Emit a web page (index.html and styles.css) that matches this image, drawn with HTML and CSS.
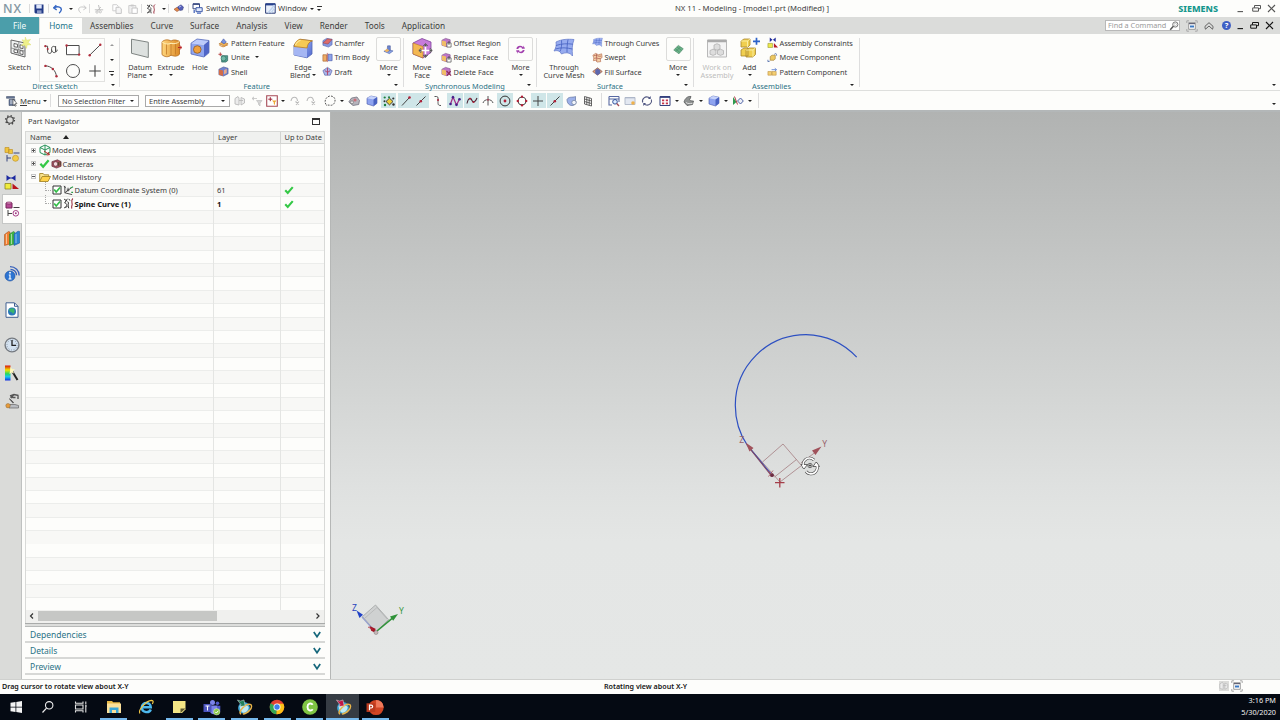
FILE: index.html
```html
<!DOCTYPE html>
<html lang="en">
<head>
<meta charset="utf-8">
<title>NX 11 - Modeling</title>
<link rel="stylesheet" href="styles.css">
</head>
<body>
<svg class="defs" width="0" height="0">
<defs>
<linearGradient id="gOr" x1="0" x2="1"><stop offset="0" stop-color="#ffd67c"/><stop offset="1" stop-color="#dc8a28"/></linearGradient>
<linearGradient id="gBl" x1="0" x2="1" y1="0" y2="1"><stop offset="0" stop-color="#a9bcf6"/><stop offset="1" stop-color="#536bd0"/></linearGradient>
<linearGradient id="gHeat" x1="0" x2="0" y1="0" y2="1"><stop offset="0" stop-color="#d81010"/><stop offset=".3" stop-color="#f2e400"/><stop offset=".55" stop-color="#25d860"/><stop offset=".75" stop-color="#18c8f0"/><stop offset="1" stop-color="#1030e0"/></linearGradient>
<symbol id="save" viewBox="0 0 10 10"><path d="M.5 .5h9v9h-8l-1-1z" fill="#223a86"/><path d="M2.3 .5h5.4v4H2.3z" fill="#dfe6fa"/><path d="M3 6.3h4.5v3.2H3z" fill="#8c9ac8"/></symbol>
<symbol id="undo" viewBox="0 0 10 10"><path d="M3.3 1.2L.7 3.8l3 2M1 3.8C5 1.8 9 3 8.2 6.2 7.8 7.7 7 8.6 6 9" fill="none" stroke="#3768c4" stroke-width="1.4"/></symbol>
<symbol id="redo" viewBox="0 0 10 10"><path d="M6.7 1.5l2.6 2.4-3 2M9 3.9C5 2 1 3 1.8 6c.3 1.5 1 2.2 2 2.7" fill="none" stroke="#c9c9c9" stroke-width="1"/></symbol>
<symbol id="cut" viewBox="0 0 10 10"><path d="M4.5 1l1.3 5.2M.8 5.8h8.4M6.8 3L2.8 7.6" fill="none" stroke="#c0c0c0"/><circle cx="3" cy="8" r="1.2" fill="none" stroke="#c9c9c9"/><circle cx="6.3" cy="7.8" r="1.1" fill="none" stroke="#c9c9c9"/></symbol>
<symbol id="copy" viewBox="0 0 10 10"><path d="M.8 .7h4l1.4 1.5v4.6H.8z" fill="#fff" stroke="#cfcfcf"/><path d="M4 3.3h3.6l1.7 1.5v4.6H4z" fill="#f5f5f5" stroke="#c6c6c6"/></symbol>
<symbol id="paste" viewBox="0 0 10 10"><path d="M.8 1.5h7v7.7h-7z" fill="#f0f0f0" stroke="#cfcfcf"/><path d="M2.7 .6h3v1.8h-3z" fill="#c9c9c9"/><path d="M4 4h5.3v5.4H4z" fill="#fff" stroke="#c6c6c6"/></symbol>
<symbol id="spine" viewBox="0 0 10 10"><path d="M1 1l3 2M4 .7L1.5 4.5M1.5 4.5c2.4.6 2.4 2 1 3.4M1 9l3-1.3M4.6 3.5c1 1.4-.7 2.7.6 5.8M5.3.8l1 1.6" fill="none" stroke="#333" stroke-width=".9"/><path d="M9 .5C6.5 2.5 9 5 8.2 6.7 7.7 7.7 7.7 8.4 8 9.6" fill="none" stroke="#9e3444" stroke-width="1"/></symbol>
<symbol id="brick" viewBox="0 0 11 9"><path d="M1 5.3l3-2 3 2.3-3 2z" fill="#e08a4b" stroke="#8a3b1f" stroke-width=".5"/><path d="M4.5 3L8 .8l2.5 2.3-1 3-2.7.3z" fill="#5861b9" stroke="#2d3474" stroke-width=".5"/><path d="M6 3.2l2.2-1.2" stroke="#cbd0ff" stroke-width=".8"/></symbol>
<symbol id="switchw" viewBox="0 0 11 11"><path d="M1 .8h6.5v5H1z" fill="#fff" stroke="#384880"/><path d="M1 1.2h6.5" stroke="#384880" stroke-width="1.4"/><path d="M4 4.7h6.2v4H4z" fill="#dfe8fb" stroke="#3e5aa8"/><path d="M2.2 7v3M5 10.2h4" stroke="#4968bc" stroke-width="1.3"/></symbol>
<symbol id="window" viewBox="0 0 11 11"><path d="M.6 .8h9.6v9.4H.6z" fill="#e9f0fb" stroke="#2e3f78" stroke-width="1"/><path d="M.6 1.4h9.6" stroke="#25408d" stroke-width="2"/><path d="M9.5 2L3 10M9.5 5L6 10" stroke="#bed3ee" stroke-width="1.3"/></symbol>
<symbol id="min" viewBox="0 0 9 9"><path d="M1.5 7.6h5.5" stroke="currentColor" stroke-width="1.1"/></symbol>
<symbol id="restore" viewBox="0 0 9 9"><path d="M2.5 3.8V1.5h6v3.2H6.8" fill="none" stroke="currentColor"/><path d="M.7 3.9h5.8v3.3H.7z" fill="none" stroke="currentColor"/></symbol>
<symbol id="close" viewBox="0 0 9 9"><path d="M1 1l7 7M8 1L1 8" stroke="currentColor" stroke-width="1.15"/></symbol>
<symbol id="lens" viewBox="0 0 10 10"><circle cx="6.3" cy="3.5" r="2.6" fill="none" stroke="#666" stroke-width=".9"/><circle cx="6.3" cy="3.5" r="1.2" fill="none" stroke="#999" stroke-width=".5"/><path d="M4.4 5.3L1.2 8.7" stroke="#555" stroke-width="1.5"/></symbol>
<symbol id="full" viewBox="0 0 12 12"><path d="M.8 3V.8H3M9 .8h2.2V3M11.2 9v2.2H9M3 11.2H.8V9" fill="none" stroke="#aaa"/><path d="M2.7 2.7h6.6v6.6H2.7z" fill="#fff" stroke="#777" stroke-width=".7"/><path d="M3 3.6h6" stroke="#667" stroke-width="1.2"/><path d="M4 6.5h4" stroke="#3a78c2" stroke-width="2"/></symbol>
<symbol id="chev2" viewBox="0 0 10 10"><path d="M1 5.3l4-3.6 4 3.6M1.5 8.2L5 5l3.5 3.2M1 5.3v1.3l.5 1.6M9 5.3v1.3l-.5 1.6" fill="none" stroke="#555" stroke-width=".9"/></symbol>
<symbol id="sketch" viewBox="0 0 22 22"><path d="M2 3l14 3v14L2 16z" fill="#f0f2f2" stroke="#666"/><path d="M5 6.5l3.5.8v3L5 9.7zM11 7.8l3 .8v3l-3-.6zM5 12.5l3.5.6V16L5 15.2zM11 13.5l3 .6v3.5l-3-.7z" fill="#fff" stroke="#555" stroke-width=".9"/><path d="M2 11l14 3M9.8 4.5v13.8" stroke="#777" stroke-width=".7"/><path d="M16.3 0l1.3 3.2L21.5 2.4l-2.3 3 2.8 2.4-3.8.1-.7 3.5-1.8-3.2-3.6.4 2.7-2.6L13 2.7l3 .7z" fill="#eef08a" stroke="#d6dc66" stroke-width=".4"/></symbol>
<symbol id="s1" viewBox="0 0 16 16"><path d="M2 4.2h2.6v5c0 3 4 3 4 0v-2.6c0-3 4-3 4 0v3.5c-1.8 1.3-3.2.2-3.2-1.4M12.6 4v5.5c.8.5 1.6-.4 1.6-1.8" fill="none" stroke="#4c4c4c"/><circle cx="2.3" cy="4.2" r="1.1" fill="#b02d3c"/><circle cx="4.7" cy="7" r="1" fill="#b02d3c"/></symbol>
<symbol id="s2" viewBox="0 0 16 16"><path d="M1.5 3.5h12.6v9.2H1.5z" fill="#fff" stroke="#4c4c4c"/><circle cx="1.6" cy="3.5" r="1.2" fill="#b02d3c"/><circle cx="14.1" cy="12.6" r="1.2" fill="#b02d3c"/></symbol>
<symbol id="s3" viewBox="0 0 16 16"><path d="M2.5 13.3L13.4 2.7" stroke="#4c4c4c"/><circle cx="2.7" cy="13.2" r="1.2" fill="#b02d3c"/><circle cx="13.3" cy="2.8" r="1.2" fill="#b02d3c"/></symbol>
<symbol id="s4" viewBox="0 0 16 16"><path d="M2.2 2.8c6 .3 10.5 4.3 11.3 10.7" fill="none" stroke="#4c4c4c"/><circle cx="2.4" cy="2.9" r="1.2" fill="#b02d3c"/><circle cx="9.8" cy="6" r="1.2" fill="#b02d3c"/><circle cx="13.5" cy="13.2" r="1.2" fill="#b02d3c"/></symbol>
<symbol id="s5" viewBox="0 0 16 16"><circle cx="8" cy="8" r="6.5" fill="none" stroke="#4c4c4c"/></symbol>
<symbol id="s6" viewBox="0 0 16 16"><path d="M8 2.2v11.6M2.2 8h11.6" stroke="#444" stroke-width="1.1"/></symbol>
<symbol id="datum" viewBox="0 0 22 22"><path d="M2.5 2.2l16.8 3v15.3l-16.8-4.2z" fill="#dde1df" stroke="#7f8583"/></symbol>
<symbol id="extrude" viewBox="0 0 22 22"><path d="M2 4.8c3-2.6 6.5-2.3 9-.8 2.5-1.8 6-1 8.5.4v12.8c-2.500 2.600-5 2.200-8.500 1-3 2.400-6.500 1.800-9-.6z" fill="url(#gOr)" stroke="#b26a1c" stroke-width=".8"/><path d="M11 6.500v11.800M6.500 7v10.500M15.500 7v10.500" stroke="#c27a28" stroke-width=".8"/><path d="M2 4.800c3 2.600 6.500 2.600 9 1.500 2.500.8 6 .5 8.500-1.900" fill="none" stroke="#fff0b8"/><path d="M18 10.500h3.500M20 8.500l1.700 2-1.700 2" stroke="#b22" fill="none"/></symbol>
<symbol id="hole" viewBox="0 0 22 22"><path d="M2 6.200L8 2l12 1.500-5 4z" fill="#bccbfb"/><path d="M2 6.200l13 1.500V20L2 17z" fill="#8fa5ee"/><path d="M15 7.700l5-4.200v12.200L15 20z" fill="#4f65c7"/><circle cx="8.300" cy="12.500" r="3.800" fill="#f0a03c" stroke="#915b22" stroke-width=".8"/><path d="M2 6.200L8 2l12 1.500v12.200L15 20 2 17z" fill="none" stroke="#5468ba" stroke-width=".8"/></symbol>
<symbol id="edge" viewBox="0 0 22 22"><path d="M2 8l6-5.600 12 1.500V17l-5 3.800L2 18z" fill="url(#gBl)" stroke="#5064b4" stroke-width=".8"/><path d="M2 10h13v10.500L2 18z" fill="#a5b6f3"/><path d="M2 9.500C3 5 5.500 3 8 2.200L20.500 3.800c-3 .8-5 3-5.500 7.200L2 9.500z" fill="#f6ca55" stroke="#b97c21" stroke-width=".8"/><path d="M3.500 8c1-2.500 2.500-4 5-4.600" fill="none" stroke="#fff2b4"/></symbol>
<symbol id="face" viewBox="0 0 22 22"><path d="M2 6l9-4.500L20 5v10.500L12 21 2 17z" fill="#c67bdb" stroke="#7e4399" stroke-width=".8"/><path d="M2 6l10 3.500V21L2 17z" fill="#f4b852" stroke="#b0742a" stroke-width=".6"/><path d="M14.500 7v13M8 13.500h13M14.500 6.500l-2 2.200h4zM14.500 20.500l-2-2.200h4zM7.800 13.500l2.200-2v4zM21.300 13.500l-2.200-2v4z" stroke="#444" fill="#fff" stroke-width=".8"/><path d="M14.500 9.500v8M10.500 13.500h8" stroke="#fff" stroke-width="1.600"/></symbol>
<symbol id="mesh" viewBox="0 0 22 22"><path d="M3 5c6-3 12-3 18-2.500-2 5-2 10-1.500 16.500C17 15.500 13 15 8.500 17 7 14 4.500 13 1 14c2-3 2.500-6 2-9z" fill="#96abef" stroke="#6b80cc" stroke-width=".8"/><path d="M8.500 3.300c.5 5-.2 8.500-1.500 11.200M15 2.500c-1 5-1 9.500-1 13M3 8.500c6-2 11-2 17-1.300M2.300 12c6-1.800 11.500-1.300 17 0" fill="none" stroke="#4460c0" stroke-width=".8"/></symbol>
<symbol id="work" viewBox="0 0 22 22"><path d="M1.500 3h19v17h-19z" fill="#f4f4f4" stroke="#b9b9b9"/><path d="M1.500 4h19" stroke="#aaa" stroke-width="2.500"/><path d="M8 8l3-1.300L14 8v4l-3 1.200L8 12zM4 13.500l3-1.300 3 1.300v3.700l-3 1.200-3-1.200zM11.500 13.500l3-1.300 3 1.300v3.700l-3 1.200-3-1.200z" fill="#ddd" stroke="#aaa" stroke-width=".7"/></symbol>
<symbol id="add" viewBox="0 0 22 22"><path d="M2 4l3-2h6v6l-2 2H2zM7 13l3-2h6.500v6.500L14 20H7zM2 13l3-2h4v8H2z" fill="#f0cf50" stroke="#a8872e" stroke-width=".8"/><path d="M2 4h6.500l2.500-2M8.500 4v6M7 13h7l2.500-2M14 13v7" fill="none" stroke="#fbf0a8" stroke-width=".9"/><path d="M17.500 .8v7M14 4.300h7" stroke="#2d62c8" stroke-width="1.700"/></symbol>
<symbol id="cube" viewBox="0 0 12 12"><path d="M1 3.200L5 1l6 1.300v6L7.500 11 1 9z" fill="#8ea3ef" stroke="#4658a8" stroke-width=".6"/><path d="M1 3.200L5 1l6 1.300L7.500 4.600z" fill="#c6d3fb"/><path d="M7.500 4.600L11 2.300v6L7.500 11z" fill="#4962c2"/></symbol>
<symbol id="pattern" viewBox="0 0 12 12"><path d="M1 7.500l4-2.200 6 2-4 2.700z" fill="#f2b456" stroke="#a86a24" stroke-width=".6"/><path d="M3.500 5.500L6 2l3 3.500-2.500 2z" fill="#7993df" stroke="#43539c" stroke-width=".6"/><path d="M1.500 9l4 1.800L11 8.500" fill="none" stroke="#d08330"/></symbol>
<symbol id="unite" viewBox="0 0 12 12"><path d="M4 4h6.500v5.500L8.500 11H4z" fill="#4f9f91" stroke="#276056" stroke-width=".7"/><circle cx="6" cy="7" r="2.700" fill="#73b8a6" stroke="#286458" stroke-width=".6"/><path d="M2.500 .5v4M.5 2.500h4" stroke="#b23a3a" stroke-width="1"/></symbol>
<symbol id="shell" viewBox="0 0 12 12"><path d="M1 3.500L6 1l5 1.500v6L6 11 1 9.500z" fill="#7183cf" stroke="#404d8c" stroke-width=".6"/><path d="M1 3.800l4.500 1V11L1 9.500z" fill="#d36c48"/><path d="M6.500 4.500L9.500 3v4.500l-3 1.500z" fill="#e9ab8d"/></symbol>
<symbol id="chamfer" viewBox="0 0 12 12"><path d="M1 4l4-2.500 6 1v6L7 11 1 9z" fill="#8497df" stroke="#4a5ba8" stroke-width=".6"/><path d="M1 6.500l5-4.500 5 .7-4.500 5z" fill="#dc6c69" stroke="#8f3842" stroke-width=".5"/></symbol>
<symbol id="trim" viewBox="0 0 12 12"><path d="M1 3h4v7H1z" fill="#f0ad64" stroke="#a5622d" stroke-width=".7"/><path d="M6.500 2.500H11v7H6.500z" fill="#8ea3e9" stroke="#4658a8" stroke-width=".7"/><path d="M5.800 1v10" stroke="#b54848" stroke-width=".8"/></symbol>
<symbol id="draft" viewBox="0 0 12 12"><path d="M1 5l5-3.500L11 5 9 10H3z" fill="#a8b6ec" stroke="#5561a8" stroke-width=".7"/><path d="M6 2v8M3 5l3 2 3-2" stroke="#b14668" fill="none"/></symbol>
<symbol id="fOff" viewBox="0 0 12 12"><path d="M1 3.500L5 1.500l5 1.500v6L6 10.500 1 9z" fill="#be76c6" stroke="#703e83" stroke-width=".6"/><path d="M1 3.800L5.500 5v5.500L1 9z" fill="#f0bd66"/><path d="M6.500 6.500h4.500v4.500H6.500z" fill="#fff" stroke="#555" stroke-width=".8"/><path d="M8.700 4.500v4" stroke="#444"/></symbol>
<symbol id="fDel" viewBox="0 0 12 12"><path d="M1 3.500L5 1.500l5 1.500v6L6 10.500 1 9z" fill="#be76c6" stroke="#703e83" stroke-width=".6"/><path d="M1 3.800L5.500 5v5.500L1 9z" fill="#f0bd66"/><path d="M6 5.500l5 5M10.500 5.500l-4 5" stroke="#8f2b58" stroke-width="1.300"/></symbol>
<symbol id="swept" viewBox="0 0 12 12"><path d="M1 3.500l3-2 3 1.500 3.500-1L11 6l-2 1.500.5 3-4 .5L4 9 1.500 9.500 2 6.500z" fill="#f5d1a7" stroke="#b66b4c" stroke-width=".7"/><path d="M2 4c3-1.500 4 1.500 8 .5M2.500 7c3-1.500 4 1 7 0M5 2c-1 3 1 4 0 8" fill="none" stroke="#a54f48" stroke-width=".7"/></symbol>
<symbol id="fill" viewBox="0 0 12 12"><path d="M.8 6L6 2l5.200 4L6 10z" fill="#e3a074" stroke="#7c4a46" stroke-width=".7"/><path d="M3.500 4.500L6 2.800 9 5v3L6 10 3.500 8z" fill="#5d67ad"/></symbol>
<symbol id="mPeople" viewBox="0 0 12 12"><path d="M1 8l4-2 6 1.500L7 10.500z" fill="#8ba2e2" stroke="#4a5fa8" stroke-width=".6"/><path d="M5 2h3v5l-2 .8L4.500 7z" fill="#6c84cd" stroke="#475998" stroke-width=".6"/><path d="M1.500 7l3-1.800L7 7 4 9z" fill="#ecb361"/></symbol>
<symbol id="mSync" viewBox="0 0 12 12"><path d="M1.500 5.500C2 2 6 .8 9 3.500V1.500l2 3.500-4 .5 1-1C6 3 4.500 3.500 3.500 5.500zM10.500 6.500C10 10 6 11.200 3 8.500v2L1 7l4-.5-1 1C6 9 7.500 8.500 8.500 6.500z" fill="#a23fae"/></symbol>
<symbol id="mSurf" viewBox="0 0 12 12"><path d="M.8 6.500l5-5 5.400 3.700-4.700 5.500z" fill="#6bb289" stroke="#3b7b58" stroke-width=".6"/><path d="M2.500 5l5 4.200M4.200 3.200l5.200 3.900M3 8.300l5-5" stroke="#41865f" stroke-width=".6"/></symbol>
<symbol id="constr" viewBox="0 0 12 12"><path d="M3 .5v5l3-2.500zM9.500 .5v5L6.500 3z" fill="#202b9a"/><path d="M1 7h5v4.500H1z" fill="#ece94b" stroke="#95922c" stroke-width=".6"/><path d="M7.500 6.500v5H12z" fill="#b71e26"/></symbol>
<symbol id="moveC" viewBox="0 0 12 12"><path d="M3.500 5l2-1.500H9v4L7.500 9h-4z" fill="#edc961" stroke="#a48139" stroke-width=".7"/><path d="M8 2.500c2-1.500 2.500-.5 2.500 1.500M1 8.500v2l2-.5" fill="none" stroke="#4a67a8" stroke-width=".9"/></symbol>
<symbol id="patC" viewBox="0 0 12 12"><path d="M1 6h4v4H1zM5.500 6H10v4H5.500z" fill="#f3cf72" stroke="#bc8d3d" stroke-width=".6"/><path d="M5 4h5M8.500 2.500l2 1.500-2 1.500" fill="none" stroke="#587cd0" stroke-width=".9"/></symbol>
<symbol id="menu" viewBox="0 0 12 12"><path d="M.5 1.500h8v1.800h-8zM3 4.500h6v6H3z" fill="#667796" stroke="#34425e" stroke-width=".5"/><path d="M4 6h3.500M4 8h3.500" stroke="#fff" stroke-width=".8"/><path d="M7 4l4 4.500-1.800.2 1 2-1 .6-1-2L7 10.500z" fill="#fff" stroke="#333" stroke-width=".6"/></symbol>
<symbol id="grp" viewBox="0 0 12 12"><path d="M1 3.500l3-2 1 1.500v7l-4-1zM7 2.500L10.500 4v4L7 10zM5 5.500h4" fill="#ececec" stroke="#b9b9b9" stroke-width=".9"/></symbol>
<symbol id="filt" viewBox="0 0 12 12"><path d="M1 3.500h5M3 1.800L1 3.500l2 1.700M5.500 5.500h5.500L9 8v3L7.500 9.500V8z" fill="#d6d6d6" stroke="#c3c3c3" stroke-width=".8"/></symbol>
<symbol id="pick" viewBox="0 0 12 12"><path d="M.7 .7h10.600v10.600H.7z" fill="#fff" stroke="#a64a56" stroke-width="1.100"/><path d="M4.300 2.200v4M2.300 4.200h4" stroke="#9f2436"/><path d="M6 5.500h4.500L9 7.500V10L7.800 9V7.500z" fill="#efaa37"/></symbol>
<symbol id="arc" viewBox="0 0 12 12"><path d="M1 6C2 1 7 1 7.500 6M5.500 6.500l3.500 3M9 6.500l-3 3.500" fill="none" stroke="#b9b9b9" stroke-width="1.100"/></symbol>
<symbol id="lasso" viewBox="0 0 12 12"><path d="M2 9.500C-.5 6 2.500 1 6.500 1S12.500 5 10 8.500 5.500 9 2 10.500" fill="none" stroke="#555" stroke-width="1" stroke-dasharray="1.800 1.200"/></symbol>
<symbol id="rock" viewBox="0 0 12 12"><path d="M.8 7L3.500 3 9 2l2.500 3.500-.8 4L5 10.500z" fill="#b6b4bc" stroke="#666574" stroke-width=".7"/><circle cx="7" cy="5" r="1.600" fill="#c7717a"/><circle cx="4" cy="7.300" r="1.500" fill="#e7e3e6" stroke="#666" stroke-width=".6"/></symbol>
<symbol id="snapdots" viewBox="0 0 12 12"><path d="M6.500 3.200l3.500 3.300-3.500 3.400L3 6.500z" fill="#efcf39" stroke="#444"/><circle cx="1.700" cy="2.500" r="1.100" fill="#19813d"/><circle cx="6" cy="2.200" r="1" fill="#19813d"/><circle cx="10.300" cy="3.500" r="1.100" fill="#333"/><circle cx="1.500" cy="6.300" r="1" fill="#333"/><circle cx="2" cy="10" r="1.200" fill="#19813d"/><circle cx="10.500" cy="9.500" r="1.200" fill="#333"/></symbol>
<symbol id="sEnd" viewBox="0 0 12 12"><path d="M2 10.500L9 3" stroke="#444"/><circle cx="9.500" cy="2.500" r="1.300" fill="#b02038"/></symbol>
<symbol id="sMid" viewBox="0 0 12 12"><path d="M1.500 10.500L10.500 1.500" stroke="#444"/><circle cx="5.800" cy="6.200" r="1.300" fill="#b02038"/></symbol>
<symbol id="sCtl" viewBox="0 0 12 12"><path d="M2.500 1.500h2c2 0 1.500 2 1.500 5s0 4 3 4" fill="none" stroke="#555"/><circle cx="6" cy="5" r="1" fill="#b02038"/></symbol>
<symbol id="sPole" viewBox="0 0 12 12"><path d="M1.500 9L4 2l3.500 8L10.500 4" fill="none" stroke="#a22c86" stroke-width="1.200"/><g fill="#45208a"><circle cx="1.500" cy="9" r="1.300"/><circle cx="4" cy="2.300" r="1.300"/><circle cx="7.500" cy="9.700" r="1.300"/><circle cx="10.500" cy="4.300" r="1.300"/></g></symbol>
<symbol id="sSpl" viewBox="0 0 12 12"><path d="M1 8.500C2.500 1.500 5 3 6 5.500S9 8 11 3" fill="none" stroke="#4b2434" stroke-width="1.100"/><circle cx="4" cy="3.800" r="1" fill="#b02038"/><circle cx="7.500" cy="7" r="1" fill="#b02038"/></symbol>
<symbol id="sInt" viewBox="0 0 12 12"><path d="M6 1v9.500M1 8c1-4.500 9-4.500 10 0" fill="none" stroke="#555"/><circle cx="6" cy="4.700" r="1" fill="#b04058"/></symbol>
<symbol id="sCen" viewBox="0 0 12 12"><circle cx="6" cy="6" r="4.900" fill="none" stroke="#333"/><circle cx="6" cy="6" r="1.400" fill="#b02038"/></symbol>
<symbol id="sQuad" viewBox="0 0 12 12"><circle cx="6" cy="6" r="4" fill="none" stroke="#555"/><g fill="#b02038"><circle cx="6" cy="1.800" r="1.200"/><circle cx="6" cy="10.200" r="1.200"/><circle cx="1.800" cy="6" r="1.200"/><circle cx="10.200" cy="6" r="1.200"/></g></symbol>
<symbol id="sPlus" viewBox="0 0 12 12"><path d="M6 1v10M1 6h10" stroke="#444"/></symbol>
<symbol id="sFace" viewBox="0 0 12 12"><path d="M1 4.500C3 1 6 3 9.500 1.500v4C11 8 9 10.500 6 10.500S1 8 1 4.500z" fill="#9db1e9" stroke="#60739f" stroke-width=".7"/><circle cx="8" cy="7.500" r="2.200" fill="#f1f5fc" stroke="#6c7b98" stroke-width=".7"/></symbol>
<symbol id="sGrid" viewBox="0 0 12 12"><path d="M2.500 1.500l7 2v7.500l-7-2zM2.500 4l7 2M2.500 6.500l7 2M4.800 2v7.500M7.200 2.800v7.500" fill="none" stroke="#555" stroke-width=".9"/></symbol>
<symbol id="zoomw" viewBox="0 0 12 12"><path d="M1 1.500h10M1 4h10M1 1.500V10h3M11 1.500V7" stroke="#596aa3" fill="none" stroke-width="1.100"/><circle cx="7" cy="6.800" r="2.300" fill="#dcecff" stroke="#30509a"/><path d="M8.700 8.500L11 11" stroke="#a24b54" stroke-width="1.300"/></symbol>
<symbol id="edobj" viewBox="0 0 12 12"><path d="M1 2.500h10v7H1z" fill="#e3e8f1" stroke="#b4bccb"/><path d="M1 2.700h10" stroke="#aeb7c8" stroke-width="1.300"/><circle cx="9" cy="8" r="1.800" fill="#efb24b"/></symbol>
<symbol id="rotate" viewBox="0 0 12 12"><path d="M1.700 7.500C.5 4 4 1 7.500 2.200l1.500 1M10.400 4.500C11.500 8 8 11 4.500 9.800L3 8.800" fill="none" stroke="#555b83" stroke-width="1.100"/><path d="M9.700 1v3H7zM2.300 11V8h2.700z" fill="#4b5380"/></symbol>
<symbol id="layout" viewBox="0 0 12 12"><path d="M1 1.500h10v9H1z" fill="#fff" stroke="#35417d"/><path d="M1 2h10" stroke="#35417d" stroke-width="1.800"/><path d="M3 4.500h2.200v1.800H3zM6.800 4.500H9v1.800H6.800zM3 7.500h2.200v1.700H3zM6.800 7.500H9v1.700H6.800z" fill="#c4354a"/></symbol>
<symbol id="shade" viewBox="0 0 12 12"><path d="M1 7C2 3 5 1 8 1.500L7 4c-1 1 0 2 3.500 2L9.500 9.500 4 10.500z" fill="#8f9291" stroke="#484a4c" stroke-width=".7"/><path d="M3 7.500c2 1.500 4 1.300 6.500.7" stroke="#dedede" fill="none"/></symbol>
<symbol id="sect" viewBox="0 0 12 12"><path d="M1 2v8l3.500-3z" fill="#2d9b4f"/><path d="M2.500 1.500l3 8" stroke="#b13b47"/><path d="M5.500 6l3-3L11.300 6l-2.800 3z" fill="#edf0f8" stroke="#5164a5"/></symbol>
<symbol id="gear" viewBox="0 0 12 12"><circle cx="6" cy="6" r="3.300" fill="none" stroke="#444" stroke-width="1.100"/><circle cx="6" cy="6" r="4.400" fill="none" stroke="#444" stroke-width="1.400" stroke-dasharray="1.400 2.060"/></symbol>
<symbol id="rAsm" viewBox="0 0 16 16"><path d="M1 1.500h4v5H1zM4.500 3.500h4v4h-4z" fill="#f1c53b" stroke="#c0932c" stroke-width=".7"/><circle cx="11.500" cy="12.300" r="3" fill="#f3cc46" stroke="#c0932c" stroke-width=".7"/><path d="M9.500 7h6M3 9v6.500M3 12h4" stroke="#35457e" fill="none"/></symbol>
<symbol id="rCon" viewBox="0 0 16 16"><path d="M2.500 1v6l4-3zM11.500 1v6l-4-3z" fill="#1d2aa0"/><path d="M5 4h4" stroke="#1d2aa0"/><path d="M1 9.500h6V15H1z" fill="#f0ec3b" stroke="#8a8721" stroke-width=".8"/><path d="M8.500 9.500V15H15z" fill="#b9141d"/></symbol>
<symbol id="rNav" viewBox="0 0 16 16"><path d="M1 2h6v5H1z" fill="#b74a95" stroke="#742258"/><ellipse cx="4" cy="2" rx="3" ry="1" fill="#eba4d3" stroke="#742258" stroke-width=".7"/><path d="M8.500 6.500h6M3 9v6M3 12.500h4" stroke="#444"/><circle cx="10.800" cy="12.300" r="2.800" fill="#fff" stroke="#a33b83"/><circle cx="10.800" cy="12.300" r="1" fill="#a33b83"/></symbol>
<symbol id="rLib" viewBox="0 0 16 16"><path d="M.5 4.500l4-3 1.500.5v12l-5.500 1.500z" fill="#f08032" stroke="#9a4515" stroke-width=".5"/><path d="M5.500 4l4-2.500 1 .5v12l-5 1.500z" fill="#43b443" stroke="#217a2c" stroke-width=".5"/><path d="M10 4l4-2.800 1.700.3V13L10 15.500z" fill="#2a83d2" stroke="#124f92" stroke-width=".5"/><path d="M2.500 4v10M7.500 4v10M12 4v9" stroke="#fff" stroke-opacity=".5"/></symbol>
<symbol id="rInfo" viewBox="0 0 16 16"><circle cx="6" cy="10" r="5" fill="#2c74d2" stroke="#174c9d" stroke-width=".6"/><path d="M6 8.500v4.500M4.500 13h3M4.800 9H6" stroke="#fff" stroke-width="1.200"/><circle cx="6" cy="6.700" r=".9" fill="#fff"/><path d="M6.500 3.300c3.500 0 6 2.700 6 6M6 .7c5.500 0 9.200 4 9.200 8.800" fill="none" stroke="#3761bb" stroke-width="1.300"/></symbol>
<symbol id="rDoc" viewBox="0 0 16 16"><path d="M2 .8h8.500l3.500 3.500v11H2z" fill="#fff" stroke="#406092"/><path d="M10.500 1v3.300H14" fill="none" stroke="#406092"/><circle cx="8" cy="9.500" r="4" fill="#2a78b9"/><path d="M5 8c2-3 3 0 4-2 3 3 1 5 0 6-1-3-3-1-4-4z" fill="#3bb56a"/></symbol>
<symbol id="rClock" viewBox="0 0 16 16"><circle cx="8" cy="8" r="6.900" fill="#d4e2f0" stroke="#757a80" stroke-width="1.400"/><circle cx="8" cy="8" r="5" fill="none" stroke="#6f7d8e" stroke-dasharray=".7 1.920"/><path d="M8 3v5.300h4" fill="none" stroke="#222" stroke-width="1.300"/></symbol>
<symbol id="rHeat" viewBox="0 0 16 16"><path d="M1 .5h5.500v15H1z" fill="url(#gHeat)"/><path d="M8 6l5.500 9" stroke="#222" stroke-width="2"/><path d="M6.500 2l1.700 2.200L11 4 9 6l1 2.500-2.500-1L5.500 9 6 6z" fill="#fff8bc"/></symbol>
<symbol id="rRobot" viewBox="0 0 16 16"><path d="M6 3l4-1.500 4.500 1M9.500 2L6 6l3.500 4M14 2.500V6M8.500 4.500h3" fill="none" stroke="#555" stroke-width="1.400"/><path d="M6 5l4 3.500" stroke="#ddd" stroke-width="1"/><path d="M6 11.500h5l3.500 1v2.500H5z" fill="#b9bcc1" stroke="#666" stroke-width=".7"/><circle cx="4" cy="12.700" r="2.200" fill="#e69a3a" stroke="#8a6a3a" stroke-width=".5"/></symbol>
<symbol id="views" viewBox="0 0 12 12"><path d="M1 3.500L6 1l5 2.500v5L6 11 1 8.500zM1 3.500L6 6l5-2.500M6 6v5M6 1v5" fill="none" stroke="#259258" stroke-width="1"/><path d="M5 7l5 3.500M9 8l1.500 2.700-3 .3" fill="none" stroke="#b52a2a"/></symbol>
<symbol id="check" viewBox="0 0 12 12"><path d="M1.500 6.300l3 3.200 6-7" fill="none" stroke="#34c846" stroke-width="2.500"/></symbol>
<symbol id="cam" viewBox="0 0 12 12"><path d="M1 4l6-2 4 2v5l-5 2-5-2z" fill="#a8505f" stroke="#5e2b36" stroke-width=".7"/><circle cx="5" cy="6.500" r="2.500" fill="#f2d7dc" stroke="#643442" stroke-width=".8"/><path d="M8 4.500v4M10 4v4" stroke="#442"/></symbol>
<symbol id="folder" viewBox="0 0 12 12"><path d="M.7 10.500V2.500h3.500l1 1.300h4.500V5.500" fill="#f8e38f" stroke="#9a7b1c" stroke-width=".8"/><path d="M.7 10.500L3.200 5.500h8.300L9 10.500z" fill="#ffd24a" stroke="#9a7b1c" stroke-width=".8"/></symbol>
<symbol id="checkbox" viewBox="0 0 10 10"><path d="M1 1h8v8H1z" fill="#fff" stroke="#333"/><path d="M2.200 4.500l2 2.500L8 2.500" fill="none" stroke="#32bd47" stroke-width="1.700"/></symbol>
<symbol id="csys" viewBox="0 0 12 12"><path d="M2 1v7.500l8 2M2 8.500L9 3M1 1l2 2.500M4 5.500h3M5.500 3v4" fill="none" stroke="#3f3f3f" stroke-width="1"/><path d="M8 3.500l3-1.500M9 8h2" stroke="#2d9b4b" stroke-width="1.200"/></symbol>
<symbol id="down" viewBox="0 0 10 10"><path d="M1.800 2L5 6.800 8.200 2" fill="none" stroke="#17687c" stroke-width="1.700"/></symbol>
<symbol id="tWin" viewBox="0 0 16 16"><path d="M2.500 3.800l5-.8v4.700h-5zM8.300 2.900l5.700-.9v5.700H8.300zM2.500 8.400h5v4.700l-5-.8zM8.300 8.400H14V14l-5.700-.9z" fill="#f4f4f4"/></symbol>
<symbol id="tFind" viewBox="0 0 16 16"><circle cx="9.200" cy="6.300" r="3.700" fill="none" stroke="#eee" stroke-width="1.100"/><path d="M6.500 9.200L2.500 13.500" stroke="#eee" stroke-width="1.200"/></symbol>
<symbol id="tTask" viewBox="0 0 16 16"><path d="M2.500 2.500v1.800h7.500V2.500M2.500 13.500v-1.800h7.500v1.800M2.500 6h7.500v4H2.500zM12.800 2.500v3M12.800 8v5.500" fill="none" stroke="#e2e2e2" stroke-width="1.100"/><path d="M12 6.200h1.700v1.500H12z" fill="#eee"/></symbol>
<symbol id="tFold" viewBox="0 0 16 16"><path d="M1 2h5l1.200 1.300H14V14H1z" fill="#e9b947"/><path d="M1 4.500h14V14H1z" fill="#fbe09a"/><path d="M3.500 14V8.500h9V14h-2.500v-3H6v3z" fill="#3aa6d8"/></symbol>
<symbol id="tIE" viewBox="0 0 16 16"><path d="M12.800 10.500C11.500 14 4 14.500 3.800 8.300 4 2.700 12.500 2.500 12.800 8.200H5" fill="none" stroke="#4db9ef" stroke-width="2.400"/><path d="M2 14.500C-1 12 8 1.500 13.500 1.300c2.300 0 1.800 2.200.8 3.700" fill="none" stroke="#f2c845" stroke-width="1.200"/></symbol>
<symbol id="tNote" viewBox="0 0 16 16"><path d="M2 2h12.500v8.500L11 14H2z" fill="#f5e685"/><path d="M9.500 14v-4.500h5z" fill="#5d5831"/></symbol>
<symbol id="tTeams" viewBox="0 0 18 16"><circle cx="9.500" cy="3" r="2.500" fill="#7b83eb"/><circle cx="14.500" cy="3.800" r="1.800" fill="#5059c9"/><path d="M7 6h7.500v6c-1 3.500-6.500 3.500-7.500 0z" fill="#7b83eb"/><path d="M14 6.300h3.300V11c0 1.500-1.300 2.300-3.300 2z" fill="#5059c9"/><path d="M.5 4.500h8v8h-8z" fill="#4b53bc"/><path d="M2.500 6.500h4M4.500 6.500v4.500" stroke="#fff" stroke-width="1.100"/><circle cx="13.700" cy="12.300" r="3.200" fill="#8bc84a" stroke="#fff" stroke-width=".4"/><path d="M12.200 12.300l1.200 1.200 2-2.300" fill="none" stroke="#fff"/></symbol>
<symbol id="tNX" viewBox="0 0 18 18"><circle cx="9" cy="9.500" r="6.200" fill="#3fa6d6"/><path d="M4.500 8c3-4 8-2 9.500 1-1 4-3 5.500-6 5.500-2-1-3.500-3.500-3.500-6.500z" fill="#bfeaf5"/><path d="M6 16C1.500 14.500 11 3.500 16.300 6c2.500 3-3 9.500-8.500 10" fill="none" stroke="#e8b54b" stroke-width="1.500"/><path d="M2 1l3.300 1.200L9 1l1.200 6.200L4.500 8l1.300-2z" fill="currentColor" stroke="#eee" stroke-width=".5"/></symbol>
<symbol id="tChrome" viewBox="0 0 16 16"><circle cx="8" cy="8" r="7.300" fill="#e34133"/><path d="M8 8L1.700 4.300A7.300 7.300 0 0 0 7.500 15.300z" fill="#34a853"/><path d="M8 8l-.5 7.300A7.300 7.300 0 0 0 14.400 4.700H8z" fill="#fbc116"/><circle cx="8" cy="8" r="3.500" fill="#fff"/><circle cx="8" cy="8" r="2.700" fill="#3f7fea"/></symbol>
<symbol id="tCam" viewBox="0 0 16 16"><circle cx="8" cy="8" r="7.800" fill="#7fc443"/><path d="M10.700 5.800C9 3.500 5.500 4.500 5.500 8s3.500 4.500 5.200 2.200" fill="none" stroke="#fff" stroke-width="1.900"/></symbol>
<symbol id="tPpt" viewBox="0 0 17 16"><circle cx="9.500" cy="8" r="7.200" fill="#d14524"/><path d="M9.500 .8a7.200 7.200 0 0 1 7.200 7.200H9.500z" fill="#f0795a"/><path d="M.5 4h8.200v8.200H.5z" fill="#bb3a1e"/><path d="M3.300 10.700V5.700h1.500c2 0 2 2.800 0 2.800H3.300" fill="none" stroke="#fff" stroke-width="1.100"/></symbol>
</defs>
</svg>

<div class="app">
<header class="titlebar">
  <span class="logo">NX</span>
  <span class="cell sep"><svg class="i10"><use href="#save"/></svg></span>
  <span class="cell sep"><svg class="i10"><use href="#undo"/></svg></span>
  <i class="caret"></i>
  <span class="cell"><svg class="i10"><use href="#redo"/></svg></span>
  <span class="cell sep"><svg class="i10"><use href="#cut"/></svg></span>
  <span class="cell"><svg class="i10"><use href="#copy"/></svg></span>
  <span class="cell"><svg class="i10"><use href="#paste"/></svg></span>
  <span class="cell sep"><svg class="i10"><use href="#spine"/></svg></span>
  <i class="caret"></i>
  <span class="cell sep"><svg class="i11"><use href="#brick"/></svg></span>
  <span class="cell sep"><svg class="i11"><use href="#switchw"/></svg></span>
  <span class="lbl">Switch Window</span>
  <span class="cell"><svg class="i11"><use href="#window"/></svg></span>
  <span class="lbl">Window</span>
  <i class="caret"></i>
  <i class="caret bar"></i>
  <span class="doc-title">NX 11 - Modeling - [model1.prt (Modified) ]</span>
  <span class="siemens">SIEMENS</span>
  <span class="cell wc"><svg class="i9"><use href="#min"/></svg></span>
  <span class="cell wc"><svg class="i9"><use href="#restore"/></svg></span>
  <span class="cell wc"><svg class="i9"><use href="#close"/></svg></span>
</header>

<nav class="tabs">
  <span class="tab file">File</span>
  <span class="tab home">Home</span>
  <span class="tab">Assemblies</span>
  <span class="tab">Curve</span>
  <span class="tab">Surface</span>
  <span class="tab">Analysis</span>
  <span class="tab">View</span>
  <span class="tab">Render</span>
  <span class="tab">Tools</span>
  <span class="tab">Application</span>
  <span class="tab-gap"></span>
  <span class="find"><span>Find a Command</span><svg class="i10"><use href="#lens"/></svg></span>
  <span class="cell"><svg class="i12"><use href="#full"/></svg></span>
  <span class="cell"><svg class="i10"><use href="#chev2"/></svg></span>
  <span class="cell"><span class="help">?</span></span>
  <span class="cell"><svg class="i9 heavy"><use href="#min"/></svg></span>
  <span class="cell"><svg class="i9 heavy"><use href="#restore"/></svg></span>
  <span class="cell"><svg class="i9 heavy"><use href="#close"/></svg></span>
</nav>

<section class="ribbon">
  <div class="group g-sketch">
    <div class="body">
      <div class="big"><svg><use href="#sketch"/></svg><span>Sketch</span></div>
      <div class="gallery">
        <svg><use href="#s1"/></svg><svg><use href="#s2"/></svg><svg><use href="#s3"/></svg>
        <svg><use href="#s4"/></svg><svg><use href="#s5"/></svg><svg><use href="#s6"/></svg>
      </div>
      <div class="scroller"><i class="caret up"></i><i class="caret"></i><i class="caret bar"></i></div>
    </div>
    <div class="foot"><span>Direct Sketch</span><i class="caret"></i></div>
  </div>
  <div class="group g-feature">
    <div class="body">
      <div class="big"><svg><use href="#datum"/></svg><span>Datum</span><span>Plane<i class="caret"></i></span></div>
      <div class="big"><svg><use href="#extrude"/></svg><span>Extrude</span><i class="caret"></i></div>
      <div class="big"><svg><use href="#hole"/></svg><span>Hole</span></div>
      <div class="stack">
        <div><svg><use href="#pattern"/></svg>Pattern Feature</div>
        <div><svg><use href="#unite"/></svg>Unite<i class="caret far"></i></div>
        <div><svg><use href="#shell"/></svg>Shell</div>
      </div>
      <div class="big"><svg><use href="#edge"/></svg><span>Edge</span><span>Blend<i class="caret"></i></span></div>
      <div class="stack">
        <div><svg><use href="#chamfer"/></svg>Chamfer</div>
        <div><svg><use href="#trim"/></svg>Trim Body</div>
        <div><svg><use href="#draft"/></svg>Draft</div>
      </div>
      <div class="big more"><b><svg><use href="#mPeople"/></svg></b><span>More</span><i class="caret"></i></div>
    </div>
    <div class="foot"><span>Feature</span><i class="caret"></i></div>
  </div>
  <div class="group g-sync">
    <div class="body">
      <div class="big"><svg><use href="#face"/></svg><span>Move</span><span>Face</span></div>
      <div class="stack">
        <div><svg><use href="#fOff"/></svg>Offset Region</div>
        <div><svg><use href="#fOff"/></svg>Replace Face</div>
        <div><svg><use href="#fDel"/></svg>Delete Face</div>
      </div>
      <div class="big more"><b><svg><use href="#mSync"/></svg></b><span>More</span><i class="caret"></i></div>
    </div>
    <div class="foot"><span>Synchronous Modeling</span><i class="caret"></i></div>
  </div>
  <div class="group g-surface">
    <div class="body">
      <div class="big"><svg><use href="#mesh"/></svg><span>Through</span><span>Curve Mesh</span></div>
      <div class="stack">
        <div><svg><use href="#mesh"/></svg>Through Curves</div>
        <div><svg><use href="#swept"/></svg>Swept</div>
        <div><svg><use href="#fill"/></svg>Fill Surface</div>
      </div>
      <div class="big more"><b><svg><use href="#mSurf"/></svg></b><span>More</span><i class="caret"></i></div>
    </div>
    <div class="foot"><span>Surface</span><i class="caret"></i></div>
  </div>
  <div class="group g-asm">
    <div class="body">
      <div class="big off"><svg><use href="#work"/></svg><span>Work on</span><span>Assembly</span></div>
      <div class="big"><svg><use href="#add"/></svg><span>Add</span><i class="caret"></i></div>
      <div class="stack">
        <div><svg><use href="#constr"/></svg>Assembly Constraints</div>
        <div><svg><use href="#moveC"/></svg>Move Component</div>
        <div><svg><use href="#patC"/></svg>Pattern Component</div>
      </div>
    </div>
    <div class="foot"><span>Assemblies</span><i class="caret"></i></div>
  </div>
  <div class="ribbon-end"><i class="caret"></i></div>
</section>

<section class="selbar">
  <span class="menu"><svg class="i12"><use href="#menu"/></svg><span><u>M</u>enu</span><i class="caret"></i></span>
  <span class="select s-filter">No Selection Filter<i class="caret"></i></span>
  <span class="select s-scope">Entire Assembly<i class="caret"></i></span>
  <div class="tools">
    <span><svg><use href="#grp"/></svg></span>
    <span><svg><use href="#filt"/></svg></span>
    <span class="w12"><svg><use href="#pick"/></svg></span>
    <span class="c"><i class="caret"></i></span>
    <span><svg><use href="#arc"/></svg></span>
    <span><svg><use href="#arc"/></svg></span>
    <span class="w18"><svg><use href="#lasso"/></svg></span>
    <span class="c w6"><i class="caret"></i></span>
    <span class="w18"><svg><use href="#rock"/></svg></span>
    <span><svg><use href="#cube"/></svg></span>
    <span class="on"><svg><use href="#snapdots"/></svg></span>
    <span class="on join"><svg><use href="#sEnd"/></svg></span>
    <span class="on joined"><svg><use href="#sMid"/></svg></span>
    <span><svg><use href="#sCtl"/></svg></span>
    <span class="on"><svg><use href="#sPole"/></svg></span>
    <span class="on"><svg><use href="#sSpl"/></svg></span>
    <span><svg><use href="#sInt"/></svg></span>
    <span class="on"><svg><use href="#sCen"/></svg></span>
    <span><svg><use href="#sQuad"/></svg></span>
    <span class="on"><svg><use href="#sPlus"/></svg></span>
    <span class="on"><svg><use href="#sMid"/></svg></span>
    <span><svg><use href="#sFace"/></svg></span>
    <span><svg><use href="#sGrid"/></svg></span>
  </div>
  <div class="tools second">
    <span><svg><use href="#zoomw"/></svg></span>
    <span><svg><use href="#edobj"/></svg></span>
    <span><svg><use href="#rotate"/></svg></span>
    <span class="w18"><svg><use href="#layout"/></svg></span>
    <span class="c w6"><i class="caret"></i></span>
    <span class="w18"><svg><use href="#shade"/></svg></span>
    <span class="c w6"><i class="caret"></i></span>
    <span class="w18"><svg><use href="#cube"/></svg></span>
    <span class="c w6"><i class="caret"></i></span>
    <span class="w18"><svg><use href="#sect"/></svg></span>
    <span class="c w6"><i class="caret"></i></span>
  </div>
  <i class="caret end"></i>
</section>

<main class="work">
  <aside class="rail">
    <span class="r-gear"><svg><use href="#gear"/></svg></span>
    <span class="low"><svg><use href="#rAsm"/></svg></span>
    <span class="low"><svg><use href="#rCon"/></svg></span>
    <span class="active"><svg><use href="#rNav"/></svg></span>
    <span><svg><use href="#rLib"/></svg></span>
    <span class="tall"><svg><use href="#rInfo"/></svg></span>
    <span><svg><use href="#rDoc"/></svg></span>
    <span class="spaced"><svg><use href="#rClock"/></svg></span>
    <span><svg><use href="#rHeat"/></svg></span>
    <span><svg><use href="#rRobot"/></svg></span>
  </aside>

  <section class="panel">
    <div class="panel-title"><span>Part Navigator</span><i class="box"></i></div>
    <div class="tree">
      <div class="thead"><span>Name<i class="sort"></i></span><span>Layer</span><span>Up to Date</span></div>
      <div class="tbody">
        <div class="row"><span><i class="pm plus"></i><svg class="i12"><use href="#views"/></svg>Model Views</span><span></span><span></span></div>
        <div class="row"><span><i class="pm plus"></i><svg class="i11"><use href="#check"/></svg><svg class="i11"><use href="#cam"/></svg>Cameras</span><span></span><span></span></div>
        <div class="row"><span><i class="pm"></i><svg class="i12"><use href="#folder"/></svg>Model History</span><span></span><span></span></div>
        <div class="row child"><span><i class="branch"></i><svg class="i10"><use href="#checkbox"/></svg><svg class="i11"><use href="#csys"/></svg>Datum Coordinate System (0)</span><span>61</span><span><svg class="i10"><use href="#check"/></svg></span></div>
        <div class="row child strong"><span><i class="branch"></i><svg class="i10"><use href="#checkbox"/></svg><svg class="i11"><use href="#spine"/></svg>Spine Curve (1)</span><span>1</span><span><svg class="i10"><use href="#check"/></svg></span></div>
        <div class="rest"><span></span><span></span><span></span></div>
      </div>
      <div class="hscroll"><svg class="i10" viewBox="0 0 10 10"><path d="M7 2.500L4.500 5l2.500 2.500" fill="none" stroke="#333" stroke-width="1.200"/></svg><div class="track"><div class="thumb"></div></div><svg class="i10" viewBox="0 0 10 10"><path d="M2.500 2.500L5 5 2.500 7.500" fill="none" stroke="#333" stroke-width="1.200"/></svg></div>
    </div>
    <div class="splitter"></div>
    <div class="fold"><span>Dependencies</span><svg class="i10"><use href="#down"/></svg></div>
    <div class="fold"><span>Details</span><svg class="i10"><use href="#down"/></svg></div>
    <div class="fold"><span>Preview</span><svg class="i10"><use href="#down"/></svg></div>
  </section>

  <section class="viewport">
    <svg viewBox="331 112 949 567" width="949" height="567">
      <g fill="none" stroke="#a57d82" stroke-width=".8">
        <path d="M762.500 462L783 444l18.500 21.500M774.500 477L796.500 459.500M801.500 465.500L780 482M747 445l33 37"/>
        <path d="M801 463l16-12"/>
      </g>
      <path d="M856.700 357.200A71.500 71.500 0 0 0 806 334.600A70.700 70.700 0 0 0 735.300 405.300C735.300 420 739.500 434 747.500 445.500L771 474" fill="none" stroke="#2c4fc2" stroke-width="1.200"/>
      <path d="M749 447.500l21 26.500" stroke="#85495f" stroke-width="1.100"/>
      <path d="M745.500 442.500l8 5.500-4 3.500zM821.500 446.500l-9.500 4 3.500 4.500z" fill="#a0525b"/>
      <path d="M775 482.700h9.500M779.800 478v9.500" stroke="#a43e49" stroke-width="1.300"/>
      <path d="M768.500 471l3.500 5M773 470.500l-4.500 6" stroke="#a44d58" stroke-width=".8"/>
      <circle cx="772" cy="475.200" r="1.900" fill="#6d2c42"/>
      <g class="axis" fill="#98626a"><text x="739.300" y="442.500">Z</text><text x="822.300" y="446.500">Y</text></g>
      <g fill="none">
        <path d="M804 467.500a6.300 6.300 0 0 1 10-7.500M816 463.500a6.300 6.300 0 0 1-10 8" stroke="#444" stroke-width="2.900"/>
        <path d="M801 464.500l3 4.500 3.500-4.500zM819.500 466.500l-3.300-4.500-3.200 4.500z" fill="#fff" stroke="#444" stroke-width=".8"/>
        <path d="M804 467.500a6.300 6.300 0 0 1 10-7.500M816 463.500a6.300 6.300 0 0 1-10 8" stroke="#fff" stroke-width="1.700"/>
        <circle cx="810" cy="465.500" r="2.200" stroke="#444" fill="#fff" stroke-width=".8"/><path d="M808.500 465.500h3M810 464v3" stroke="#333" stroke-width=".8"/>
      </g>
      <path d="M362.500 616.500l13-11.500 13 14.500-12.500 12.500z" fill="#cfd1d1" stroke="#9a9c9c" stroke-width=".7"/>
      <path d="M365 618l12-10.500 10 11.500" fill="none" stroke="#b0b2b2" stroke-width=".7"/>
      <path d="M375.500 632L362 617" stroke="#95a0cd" stroke-width="1.200"/>
      <path d="M377 631l16-13.300" stroke="#2f9239" stroke-width="1.600"/>
      <path d="M398 614l-8 2.500 3.200 4.200z" fill="#2f9239"/>
      <path d="M356.500 610.500l6.500 4.200-3.500 3.300z" fill="#2041c6"/>
      <path d="M369.500 626l6 2.800-.3 4-4-2z" fill="#a51526"/>
      <path d="M368 627l5 2.500" stroke="#b02a39" stroke-width=".8"/>
      <circle cx="376" cy="632.500" r="2" fill="#c7b7b7" stroke="#777" stroke-width=".5"/>
      <g class="axis"><text x="352" y="611" fill="#2944bd">Z</text><text x="399" y="613.500" fill="#379844">Y</text></g>
    </svg>
  </section>
</main>

<footer class="status">
  <span class="left">Drag cursor to rotate view about X-Y</span>
  <span class="mid">Rotating view about X-Y</span>
  <span class="dim"><svg class="i10"><use href="#grp"/></svg></span>
  <svg class="i12"><use href="#full"/></svg>
</footer>

<footer class="taskbar">
  <span><svg><use href="#tWin"/></svg></span>
  <span><svg><use href="#tFind"/></svg></span>
  <span><svg><use href="#tTask"/></svg></span>
  <span class="run"><svg><use href="#tFold"/></svg></span>
  <span><svg><use href="#tIE"/></svg></span>
  <span class="run"><svg><use href="#tNote"/></svg></span>
  <span class="run"><svg class="wide"><use href="#tTeams"/></svg></span>
  <span class="run nx-green"><svg class="wide"><use href="#tNX"/></svg></span>
  <span class="run"><svg><use href="#tChrome"/></svg></span>
  <span class="run"><svg><use href="#tCam"/></svg></span>
  <span class="run current nx-red"><svg class="wide"><use href="#tNX"/></svg></span>
  <span class="run"><svg class="wide"><use href="#tPpt"/></svg></span>
  <div class="clock"><div>3:16 PM</div><div>5/30/2020</div></div>
</footer>
</div>
</body>
</html>
```
FILE: styles.css
```css
* { box-sizing: border-box; }
body { margin: 0; font-family: "Noto Sans", "Open Sans", sans-serif; font-size: 7.4px; color: #3c3c3c; background: #fdfdfb; }
i { font-style: normal; }
svg { display: block; flex: none; }
.defs { position: absolute; }
.app { width: 1280px; height: 720px; overflow: hidden; display: flex; flex-direction: column; white-space: nowrap; }
.i9 { width: 9px; height: 9px; }
.i10 { width: 10px; height: 10px; }
.i11 { width: 11px; height: 11px; }
.i12 { width: 12px; height: 12px; }
.cell { display: flex; align-items: center; justify-content: center; height: 100%; }
.caret { display: block; width: 0; height: 0; flex: none; border: 2px solid transparent; border-top: 2.5px solid #222; border-bottom: 0; justify-self: center; }
.caret.up { border-top: 0; border-bottom: 2.5px solid #999; }
.caret.bar { position: relative; }
.caret.bar::before { content: ""; position: absolute; left: -2.5px; top: -5px; width: 5px; height: 1px; background: #333; }

.titlebar { height: 17px; flex: none; display: grid; align-items: center; grid-template-rows: 17px;
  grid-template-columns: 29px 19px 19px 8px 14px 20px 16px 16px 19px 8px 20px 18px 56px 16px 32px 4px 10px 850px 58px 16px 16px 14px; }
.logo { font-family: "Open Sans", "Noto Sans", sans-serif; font-size: 12.2px; font-weight: 600; color: #8598a3; padding-left: 3px; line-height: 17px; letter-spacing: 1px; }
.titlebar .sep { position: relative; }
.titlebar .sep::before { content: ""; position: absolute; left: 0; top: 4px; height: 9px; width: 1px; background: #dcdcdc; }
.titlebar .lbl { font-size: 7.7px; padding-bottom: 1px; }
.titlebar .bar { margin-top: 3px; }
.doc-title { padding-left: 351px; font-size: 7.7px; padding-bottom: 1px; }
.siemens { color: #15978d; font-weight: 800; font-size: 9px; padding-top: 1px; line-height: 14px; justify-self: end; margin-right: 14px; }
.wc { color: #555; }

.tabs { height: 17px; flex: none; display: flex; align-items: center; background: #dbdcda; font-size: 8.25px; }
.tabs > .tab { padding-left: 17px; height: 17px; line-height: 17px; }
.tabs > .file { width: 39px; padding: 0; text-align: center; background: #4b9eaa; color: #f3fbfb; }
.tabs > .home { width: 42px; margin: 1px 0 0 1px; height: 16px; line-height: 16px; padding: 0; text-align: center; background: #fdfdfb; color: #23758a; }
.tabs > .home + .tab { padding-left: 8px; }
.tab-gap { flex: 1; }
.find { width: 75px; height: 11px; background: #fff; border: 1px solid #b8b8b8; display: flex; align-items: center; justify-content: space-between; padding: 0 0 0 2px; color: #9a9a9a; font-size: 7.3px; line-height: 9px; margin-right: 3px; }
.tabs .cell { width: 17px; }
.tabs .cell:nth-last-child(5) { width: 18px; }
.tabs .cell:nth-last-child(3) { width: 11px; }
.tabs .cell:nth-last-child(2) { width: 17px; }
.tabs .cell:last-child { width: 13px; margin-right: 4px; }
.heavy { color: #151515; }
.help { width: 9px; height: 9px; border-radius: 50%; background: #3e5fc4; color: #fff; font-size: 7.5px; line-height: 9px; text-align: center; font-weight: 700; }

.ribbon { height: 57px; flex: none; display: flex; border-bottom: 1px solid #dedfdd; }
.group { display: flex; flex-direction: column; position: relative; }
.group::after { content: ""; position: absolute; right: 0; top: 4px; bottom: 3px; width: 1px; background: #dedede; }
.body { display: flex; height: 47px; }
.g-sketch { width: 120px; }
.g-feature { width: 283.5px; }
.g-sync { width: 133px; }
.g-surface { width: 157px; }
.g-asm { width: 166px; }
.foot { display: grid; grid-template-columns: 1fr 15px; text-align: center; color: #2b7286; line-height: 9px; height: 9px; align-items: center; font-size: 7.4px; padding-top: 1px; }
.foot span { padding-left: 5px; }
.foot .caret { margin-top: -3px; }
.big { display: flex; flex-direction: column; align-items: center; line-height: 8.5px; padding-top: 3px; }
.big > svg { width: 22px; height: 22px; margin-bottom: 3.5px; }
.big > span { display: flex; align-items: center; gap: 2px; }
.big > .caret { margin-top: 2.5px; }
.g-sketch .big { width: 39px; }
.gallery { width: 66px; height: 44px; margin-top: 4px; border: 1px solid #e2e2e0; display: grid; grid-template-columns: repeat(3, 22px); grid-template-rows: 21px 22px; place-items: center; }
.gallery svg { width: 16px; height: 16px; }
.scroller { width: 13px; display: flex; flex-direction: column; align-items: center; justify-content: space-between; padding: 10px 0 5px; }
.g-feature .big:nth-child(1) { width: 40px; }
.g-feature .big:nth-child(2) { width: 22px; align-items: center; }
.g-feature .big:nth-child(3) { width: 36px; }
.g-feature .stack:nth-child(4) { width: 71px; letter-spacing: -.03px; }
.g-feature .big:nth-child(5) { width: 28px; }
.g-feature .stack:nth-child(6) { width: 58.5px; padding-left: 4.5px; }
.stack { display: flex; flex-direction: column; padding-top: 1.2px; }
.stack > div { display: flex; align-items: center; height: 14.7px; gap: 2px; }
.stack svg { width: 11px; height: 11px; }
.stack .far { margin-left: 3px; }
.more { width: 26px; }
.more b { width: 25px; height: 24px; border: 1px solid #dcdcda; border-radius: 2px; display: grid; place-items: center; margin-bottom: 1.5px; }
.more b svg { width: 11px; height: 11px; }
.g-sync .big:first-child { width: 37px; }
.g-sync .stack { width: 67px; }
.g-surface .big:first-child { width: 55px; }
.g-surface .stack { width: 73.5px; letter-spacing: -.04px; }
.g-asm .big:nth-child(1) { width: 47px; }
.g-asm .big:nth-child(2) { width: 18px; }
.g-asm .stack { padding-left: 8px; letter-spacing: -.07px; }
.off { color: #bdbdbd; }
.ribbon-end { flex: 1; display: flex; justify-content: flex-end; align-items: flex-end; padding: 0 4px 4px; }

.selbar { height: 21px; flex: none; display: flex; align-items: center; border-bottom: 2px solid #b3b7b8; }
.menu { width: 51px; margin-right: 7px; height: 13px; border-right: 1px solid #ddd; display: flex; align-items: center; padding-left: 6px; gap: 2px; font-size: 7.7px; }
.select { height: 12px; line-height: 10px; border: 1px solid #a9a9a9; background: #fff; display: flex; align-items: center; justify-content: space-between; padding: 1px 4px 0 3px; font-size: 7.45px; margin-right: 6px; }
.s-filter { width: 81px; }
.s-scope { width: 85px; margin-right: 2px; }
.tools { display: flex; align-items: center; height: 15px; padding-right: 4px; border-right: 1px solid #ddd; }
.tools > span { width: 16.65px; height: 15px; display: grid; place-items: center; flex: none; background-clip: content-box; padding: 0 .7px; }
.tools > .w12 { width: 13px; }
.tools > .c { width: 9px; }
.tools > .w6 { width: 6px; }
.tools > .w18 { width: 18.5px; }
.tools > .on { background-color: #cfe6e8; }
.tools > .join { padding-right: 0; }
.tools > .joined { padding-left: 0; }
.tools svg { width: 12px; height: 12px; }
.tools.second { margin-left: 4px; padding-right: 5px; }
.selbar .end { margin: 7px 4px 0 auto; }

.work { flex: 1; display: flex; min-height: 0; }
.rail { width: 22px; background: #dadbd9; border-right: 1px solid #bfc1c0; display: flex; flex-direction: column; padding-left: 2px; }
.rail > span { height: 28px; display: grid; place-items: center; flex: none; }
.rail > .r-gear { height: 26px; padding: 0 3px 10px 0; }
.rail > .low { padding-top: 3px; }
.rail > .active { height: 30px; background: #fdfdfb; border: 1px solid #c5c7c6; border-right: 0; margin-right: -1px; }
.rail > .tall { height: 44px; }
.rail > .spaced { margin-top: 7px; }
.rail svg { width: 16px; height: 16px; }
.rail .r-gear svg { width: 12px; height: 12px; }

.panel { width: 309px; border-right: 1px solid #b5b7b6; padding: 0 5px 0 3px; display: flex; flex-direction: column; }
.panel-title { height: 18.5px; display: flex; align-items: center; justify-content: space-between; padding: 0 5px 0 3px; font-size: 7.5px; flex: none; }
.box { width: 8px; height: 7px; border: 1px solid #333; border-top-width: 2px; }
.tree { border: 1px solid #d8d9d7; border-bottom: 0; display: flex; flex-direction: column; font-size: 7.5px; }
.thead, .row, .rest { display: grid; grid-template-columns: 188px 67px 1fr; }
.thead { height: 12.5px; background: #f0f1ef; border-bottom: 1px solid #d2d3d1; line-height: 11.5px; }
.thead span { padding-left: 4px; border-right: 1px solid #d2d3d1; display: flex; align-items: center; }
.thead span:last-child { border-right: 0; padding-left: 3.5px; font-size: 7.4px; }
.sort { margin-left: 12px; border: 3px solid transparent; border-top: 0; border-bottom: 4px solid #222; }
.row { height: 13.35px; }
.row > span, .rest > span { display: flex; align-items: center; border-right: 1px solid #e4e5e3; padding: 0 0 1px 3px; min-width: 0; }
.row > span:last-child, .rest > span:last-child { border-right: 0; }
.tbody { height: 466px; overflow: hidden; background: repeating-linear-gradient(#fdfdfb 0, #fdfdfb 12.35px, #ecedeb 12.35px, #ecedeb 13.35px, #f8f8f6 13.35px, #f8f8f6 25.7px, #ecedeb 25.7px, #ecedeb 26.7px); }
.rest { height: 399.25px; }
.pm { width: 5px; height: 5px; border: 1px solid #c5c5c5; margin: 0 2px 0 2px; background: linear-gradient(#555, #555) center / 3px 1px no-repeat; flex: none; }
.pm.plus { background: linear-gradient(#555, #555) center / 3px 1px no-repeat, linear-gradient(#555, #555) center / 1px 3px no-repeat; }
.row > span:first-child { gap: 1px; }
.row > span:first-child svg + svg { margin-left: -.5px; }
.branch { width: 6px; border-top: 1px dotted #aaa; margin-left: 16px; flex: none; position: relative; }
.branch::before { content: ""; position: absolute; left: 0; top: -9px; height: 9px; border-left: 1px dotted #aaa; }
.strong { font-weight: 700; color: #111; font-size: 7.6px; }
.hscroll { height: 13px; padding-bottom: 1px; display: flex; align-items: center; background: #f0f0ee; }
.track { flex: 1; }
.thumb { width: 179px; height: 10px; background: #c6c7c5; margin-left: 1.5px; }
.splitter { height: 4px; background: #dcdddb; border-top: 1px solid #a9abaa; border-bottom: 1px solid #b8bab9; flex: none; }
.fold { height: 16px; display: flex; align-items: center; justify-content: space-between; border-bottom: 2px solid #d7d8d6; padding: 1px 3px 0 5px; color: #2b7286; font-size: 8.5px; flex: none; }

.viewport { flex: 1; background: linear-gradient(#b1b3b2 0, #c6c8c7 170px, #d3d5d4 280px, #dfe1e0 375px, #e4e6e5 430px, #e5e7e6 100%); }
.axis { font-family: "Noto Sans", sans-serif; font-size: 8.5px; }

.status { height: 15px; flex: none; display: flex; align-items: center; border-top: 1px solid #cfd0ce; background: #fdfdfb; font-weight: 600; color: #151515; font-size: 7.15px; padding: 0 0 3px 2px; }
.status .left { width: 602px; }
.status .mid { width: 615px; }
.dim { background: #dcdcda; margin-right: 2px; }

.taskbar { height: 26px; flex: none; background: #050a13; display: flex; }
.taskbar > span { width: 32.7px; display: grid; place-items: center; }
.taskbar > span:first-child { width: 32px; }
.taskbar svg { width: 16px; height: 16px; }
.taskbar svg.wide { width: 18px; height: 17px; }
.taskbar .run { background: linear-gradient(#76b9ed, #76b9ed) center bottom / 27px 2px no-repeat; }
.taskbar .run.current { background: linear-gradient(#76b9ed, #76b9ed) center bottom / 100% 2px no-repeat #363c44; }
.nx-green { color: #20805a; }
.nx-red { color: #bf1746; }
.clock { margin-left: auto; display: flex; flex-direction: column; justify-content: center; text-align: right; color: #f2f2f2; font-size: 7.3px; line-height: 12px; padding: 0 4px 2px 0; }
```
